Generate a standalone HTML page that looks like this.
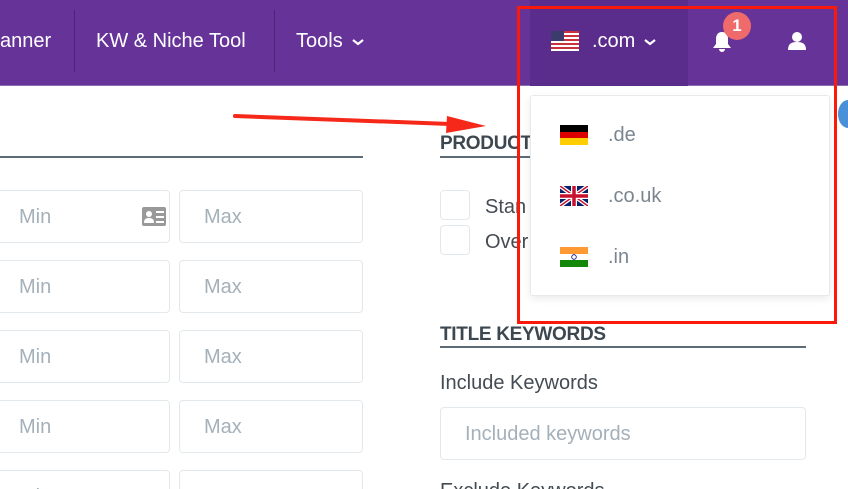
<!DOCTYPE html>
<html><head><meta charset="utf-8"><style>
*{box-sizing:border-box;margin:0;padding:0}
html,body{width:848px;height:489px;overflow:hidden}
body{background:#fff;font-family:"Liberation Sans",sans-serif;position:relative}
.a{position:absolute}
.nav{left:0;top:0;width:848px;height:86px;background:#663399;border-bottom:1px solid #8a6fb0}
.nt{color:#fff;font-size:20px;top:30px}
.sep{width:1px;top:10px;height:62px;background:#4b2377}
.in{border:1px solid #e3e8ec;border-radius:4px;height:53px;background:#fff;color:#a4b0ba;font-size:20px;padding:15px 0 0 0}
.lbl{color:#444b52;font-size:20px}
.hd{color:#3d4750;font-size:19px;font-weight:bold;letter-spacing:-0.3px}
.cb{width:30px;height:30px;border:1px solid #e3e8ec;border-radius:4px}
.dd{left:530px;top:95px;width:300px;height:201px;background:#fff;border:1px solid #e6eaed;border-radius:3px;box-shadow:0 3px 8px rgba(0,0,0,.08)}
.it{color:#7a8590;font-size:20px}
.flag{width:28px;height:20px}
</style></head><body>
<div class="a nav"></div>
<div class="a" style="left:530px;top:0;width:158px;height:86px;background:#5a2d8c"></div>
<div class="a nt" style="left:0">anner</div>
<div class="a sep" style="left:74px"></div>
<div class="a nt" style="left:96px">KW &amp; Niche Tool</div>
<div class="a sep" style="left:274px"></div>
<div class="a nt" style="left:296px">Tools <svg width="14" height="10" viewBox="0 0 14 10" style="margin-left:3px"><path d="M2 3l5 4 5-4" stroke="#fff" stroke-width="2.2" fill="none"/></svg></div>
<svg class="a" style="left:551px;top:31px" width="28" height="20" viewBox="0 0 28 20"><rect width="28" height="20" fill="#fff"/><g fill="#c8313e"><rect y="0" width="28" height="2"/><rect y="4" width="28" height="2"/><rect y="8" width="28" height="2"/><rect y="12" width="28" height="2"/><rect y="16" width="28" height="2"/></g><rect width="13" height="10" fill="#3b3b6d"/></svg>
<div class="a nt" style="left:592px">.com <svg width="14" height="10" viewBox="0 0 14 10" style="margin-left:2px"><path d="M2 3l5 4 5-4" stroke="#fff" stroke-width="2.2" fill="none"/></svg></div>
<svg class="a" style="left:710px;top:30px" width="24" height="24" viewBox="0 0 24 24"><path d="M12 2c-4 0-6 3-6 7v5l-3 4h18l-3-4V9c0-4-2-7-6-7z M9 19a3 3 0 0 0 6 0z" fill="#fff"/></svg>
<div class="a" style="left:723px;top:12px;width:28px;height:28px;border-radius:50%;background:#ef6a6a;color:#fff;font-size:17px;font-weight:bold;text-align:center;line-height:28px">1</div>
<svg class="a" style="left:787px;top:31px" width="20" height="20" viewBox="0 0 20 20"><circle cx="10" cy="6" r="5" fill="#fff"/><path d="M1 19c0-6 3-8 9-8s9 2 9 8z" fill="#fff"/></svg>

<div class="a" style="left:0;top:156px;width:363px;height:2px;background:#5c6b75"></div>
<div class="a" style="left:838px;top:100px;width:20px;height:28px;border-radius:50%;background:#4a90d9"></div>

<div class="a in" style="left:-10px;top:190px;width:180px;padding-left:28px">Min</div>
<svg class="a" style="left:142px;top:207px" width="24" height="19" viewBox="0 0 24 19"><rect width="24" height="19" rx="2" fill="#999"/><circle cx="7" cy="7" r="3" fill="#fff"/><path d="M2 16c0-4 2-5 5-5s5 1 5 5z" fill="#fff"/><rect x="14" y="4" width="8" height="2" fill="#fff"/><rect x="14" y="9" width="8" height="2" fill="#fff"/><rect x="14" y="14" width="8" height="2" fill="#fff"/></svg>
<div class="a in" style="left:179px;top:190px;width:184px;padding-left:24px">Max</div>
<div class="a in" style="left:-10px;top:260px;width:180px;padding-left:28px">Min</div>
<div class="a in" style="left:179px;top:260px;width:184px;padding-left:24px">Max</div>
<div class="a in" style="left:-10px;top:330px;width:180px;padding-left:28px">Min</div>
<div class="a in" style="left:179px;top:330px;width:184px;padding-left:24px">Max</div>
<div class="a in" style="left:-10px;top:400px;width:180px;padding-left:28px">Min</div>
<div class="a in" style="left:179px;top:400px;width:184px;padding-left:24px">Max</div>
<div class="a in" style="left:-10px;top:470px;width:180px;padding-left:28px">Min</div>
<div class="a in" style="left:179px;top:470px;width:184px;padding-left:24px">Max</div>

<div class="a hd" style="left:440px;top:133px">PRODUCT</div>
<div class="a" style="left:440px;top:156px;width:90px;height:2px;background:#5c6b75"></div>
<div class="a cb" style="left:440px;top:190px"></div>
<div class="a cb" style="left:440px;top:225px"></div>
<div class="a lbl" style="left:485px;top:196px">Stan</div>
<div class="a lbl" style="left:485px;top:231px">Over</div>

<div class="a hd" style="left:440px;top:324px">TITLE KEYWORDS</div>
<div class="a" style="left:440px;top:346px;width:366px;height:2px;background:#5c6b75"></div>
<div class="a lbl" style="left:440px;top:372px">Include Keywords</div>
<div class="a in" style="left:440px;top:407px;width:366px;height:53px;padding-left:24px">Included keywords</div>
<div class="a lbl" style="left:440px;top:480px">Exclude Keywords</div>

<div class="a dd"></div>
<svg class="a flag" style="left:560px;top:125px" viewBox="0 0 28 20"><rect width="28" height="7" fill="#000"/><rect y="7" width="28" height="6" fill="#dd0000"/><rect y="13" width="28" height="7" fill="#ffce00"/></svg>
<div class="a it" style="left:608px;top:124px">.de</div>
<svg class="a flag" style="left:560px;top:186px" viewBox="0 0 28 20"><rect width="28" height="20" fill="#012169"/><path d="M0 0L28 20M28 0L0 20" stroke="#fff" stroke-width="4"/><path d="M0 0L28 20M28 0L0 20" stroke="#c8102e" stroke-width="1.5"/><path d="M14 0v20M0 10h28" stroke="#fff" stroke-width="6"/><path d="M14 0v20M0 10h28" stroke="#c8102e" stroke-width="3.5"/></svg>
<div class="a it" style="left:608px;top:185px">.co.uk</div>
<svg class="a flag" style="left:560px;top:247px" viewBox="0 0 28 20"><rect width="28" height="7" fill="#ff9933"/><rect y="7" width="28" height="6" fill="#fff"/><rect y="13" width="28" height="7" fill="#138808"/><circle cx="14" cy="10" r="2.3" fill="none" stroke="#000080" stroke-width="0.8"/></svg>
<div class="a it" style="left:608px;top:246px">.in</div>

<div class="a" style="left:517px;top:6px;width:320px;height:318px;border:3px solid #fb1a0a"></div>
<svg class="a" style="left:0;top:0" width="848" height="489"><path d="M235 116L450 124" stroke="#f5281a" stroke-width="4" stroke-linecap="round"/><path d="M447 116L486 126L446 133z" fill="#f5281a"/></svg>
</body></html>
